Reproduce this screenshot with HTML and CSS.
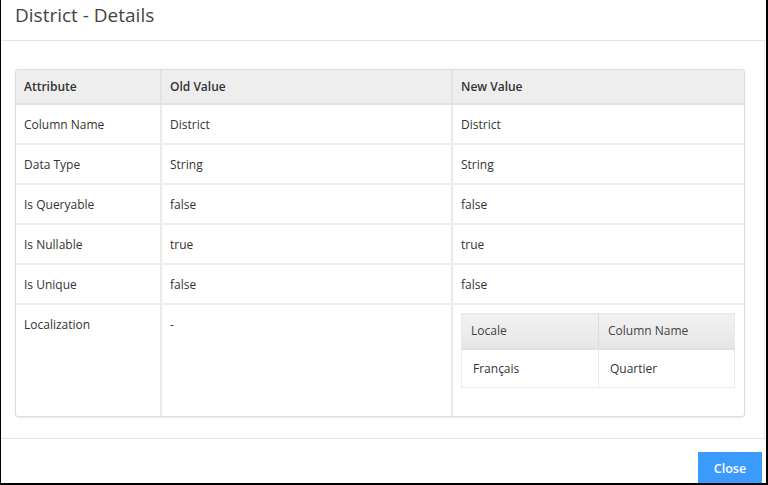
FILE: index.html
```html
<!DOCTYPE html>
<html lang="en">
<head>
	<meta charset="UTF-8">
	<title>District - Details</title>
	<link rel="stylesheet" href="styles.css">
</head>
<body>
<div class="modal">
	<div class="modal-header">
		<h1 class="title">District - Details</h1>
	</div>
	<div class="modal-body">
		<table class="grid">
			<colgroup>
				<col class="col-attr">
				<col class="col-old">
				<col>
			</colgroup>
			<thead>
			<tr>
				<th>Attribute</th>
				<th>Old Value</th>
				<th>New Value</th>
			</tr>
			</thead>
			<tbody>
			<tr><td>Column Name</td><td>District</td><td>District</td></tr>
			<tr><td>Data Type</td><td>String</td><td>String</td></tr>
			<tr><td>Is Queryable</td><td>false</td><td>false</td></tr>
			<tr><td>Is Nullable</td><td>true</td><td>true</td></tr>
			<tr><td>Is Unique</td><td>false</td><td>false</td></tr>
			<tr class="tall">
				<td>Localization</td>
				<td>-</td>
				<td class="nested-cell">
					<table class="sub-grid">
						<thead>
						<tr><th>Locale</th><th>Column Name</th></tr>
						</thead>
						<tbody>
						<tr><td>Français</td><td>Quartier</td></tr>
						</tbody>
					</table>
				</td>
			</tr>
			</tbody>
		</table>
	</div>
	<div class="modal-footer">
		<button class="btn-close">Close</button>
	</div>
</div>
</body>
</html>
```

FILE: styles.css
```css
* {
	box-sizing: border-box;
}

body {
	margin: 0;
	background: #FFF;
	font-family: "Open Sans", "Noto Sans", sans-serif;
	color: #333;
}

.modal {
	width: 768px;
	height: 485px;
	border-left: 1px solid #000;
	border-right: 2px solid #000;
	border-bottom: 2px solid #000;
	display: flex;
	flex-direction: column;
	overflow: hidden;
}

.modal-header {
	height: 41px;
	border-bottom: 1px solid #E5E5E5;
	padding: 2px 14px 0;
}

.title {
	margin: 0;
	font-size: 19px;
	font-weight: normal;
	color: #444;
	line-height: 26px;
}

.modal-body {
	flex: 1;
	padding: 28px 19px 0 14px;
	border-right: 1px solid #EEE;
	margin-right: 1px;
}

.grid {
	width: 730px;
	table-layout: fixed;
	border-collapse: separate;
	border-spacing: 0;
	border: 1px solid #DDD;
	border-radius: 3px;
	font-size: 12px;
	box-shadow: 0 1px 2px rgba(0, 0, 0, 0.08);
}

.grid .col-attr {
	width: 144px;
}

.grid .col-old {
	width: 291px;
}

.grid th {
	background: #EEE;
	font-weight: 600;
	text-align: left;
	height: 35px;
	padding: 0 8px;
	color: #333;
	border-bottom: 2px solid #E2E2E2;
	border-left: 2px solid #E2E2E2;
}

.grid th:first-child,
.grid > tbody > tr > td:first-child {
	border-left: none;
}

.grid > tbody > tr > td {
	height: 40px;
	padding: 0 8px;
	border-left: 2px solid #EBEBEB;
	border-top: 2px solid #EFEFEF;
	color: #333;
}

.grid > tbody > tr:first-child > td {
	border-top: none;
	height: 38px;
}

.grid > tbody > tr.tall > td {
	height: 113px;
	vertical-align: top;
	padding-top: 11px;
}

.grid > tbody > tr.tall > td.nested-cell {
	padding: 8px 9px 0 8px;
}

.sub-grid {
	width: 274px;
	border-collapse: collapse;
	border: 1px solid #EAEAEA;
	font-size: 12px;
}

.sub-grid th {
	background: linear-gradient(#F2F2F2, #E6E6E6);
	font-weight: normal;
	text-align: left;
	height: 35px;
	padding: 0 9px;
	color: #444;
	border-left: 1px solid #DDD;
}

.sub-grid th:first-child,
.sub-grid td:first-child {
	border-left: none;
	width: 137px;
}

.sub-grid td {
	height: 39px;
	padding: 0 11px;
	border-left: 1px solid #EAEAEA;
	color: #333;
}

.modal-footer {
	height: 45px;
	border-top: 1px solid #E5E5E5;
	display: flex;
	justify-content: flex-end;
	align-items: flex-start;
	padding: 13px 4px 0 0;
}

.btn-close {
	width: 64px;
	height: 32px;
	background: #3A9BFC;
	color: #FFF;
	border: none;
	font-family: "Open Sans", sans-serif;
	font-size: 12.5px;
	font-weight: 600;
	cursor: pointer;
}
```
